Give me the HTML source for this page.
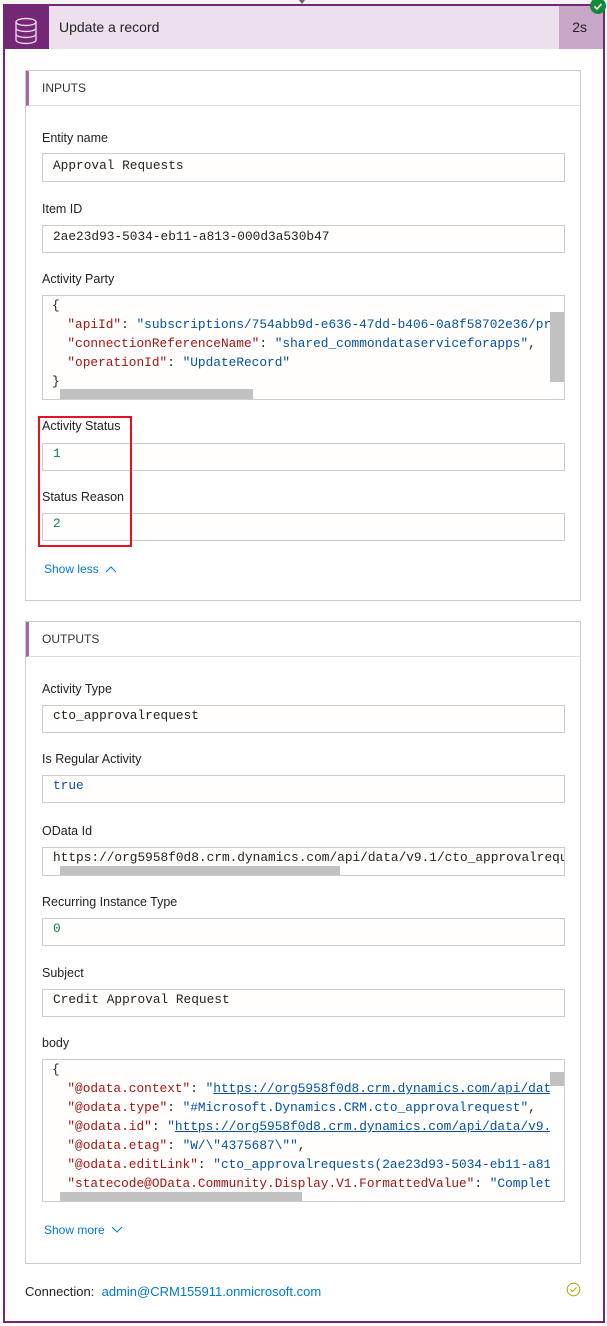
<!DOCTYPE html>
<html><head><meta charset="utf-8"><style>
*{box-sizing:border-box;margin:0;padding:0}
body{width:607px;height:1326px;background:#fff;font-family:"Liberation Sans",sans-serif;position:relative;overflow:hidden;color:#222}
.abs{position:absolute}
.outer{left:3px;top:4px;width:602px;height:1319px;border:2px solid #742774}
.hdr{left:5px;top:6px;width:598px;height:43px;background:#ebe0ec}
.ico{left:5px;top:6px;width:44px;height:43px;background:#742774}
.time{left:559px;top:6px;width:44px;height:43px;background:#c9a7c9;font-size:14px;line-height:43px;text-align:right;padding-right:16px;color:#222}
.title{left:59px;top:6px;line-height:43px;font-size:14px;color:#222}
.card{border:1px solid #ccc;background:#fff}
.ch{position:absolute;left:0;top:0;right:0;height:35px;border-bottom:1px solid #ddd;border-left:3px solid #a066a6;font-size:12px;line-height:35px;padding-left:13px;color:#333}
.lbl{position:absolute;left:42px;font-size:12.5px;color:#222}
.box{position:absolute;left:42px;width:523px;border:1px solid #ccc;background:#fffefc;font-family:"Liberation Mono",monospace;font-size:12.8px;padding-left:10px;color:#222;white-space:pre;overflow:hidden}
.g{color:#098658}.b{color:#0451a5}.r{color:#a31515}
.link{color:#0078d4;font-size:12px}
</style></head><body>
<div class="abs" style="left:0;top:0;width:607px;height:5px;background:#f4f4f4"></div>
<div class="abs outer"></div>
<div class="abs" style="left:299px;top:0;width:0;height:0;border-left:3px solid transparent;border-right:3px solid transparent;border-top:4px solid #666"></div>
<div class="abs hdr"></div>
<div class="abs ico"><svg width="44" height="43" viewBox="0 0 44 43"><g fill="none" stroke="#e8d8e8" stroke-width="1.4"><ellipse cx="21" cy="16" rx="10" ry="3.5"/><path d="M11 16v18c0 2 4.5 3.5 10 3.5s10-1.5 10-3.5V16M11 22c0 2 4.5 3.5 10 3.5s10-1.5 10-3.5M11 28c0 2 4.5 3.5 10 3.5s10-1.5 10-3.5"/></g></svg></div>
<div class="abs title">Update a record</div>
<div class="abs time">2s</div>
<div class="abs" style="left:590px;top:-2px;width:16px;height:16px;border-radius:50%;background:#138a36"><svg width="16" height="16"><path d="M4.5 8.5l2.5 2.5 4.5-5" stroke="#fff" stroke-width="1.6" fill="none"/></svg></div>

<div class="abs card" style="left:25px;top:70px;width:556px;height:531px"><div class="ch">INPUTS</div></div>
<div class="lbl" style="top:131px">Entity name</div>
<div class="box" style="top:153px;height:29px;line-height:23px">Approval Requests</div>
<div class="lbl" style="top:202px">Item ID</div>
<div class="box" style="top:225px;height:28px;line-height:22px">2ae23d93-5034-eb11-a813-000d3a530b47</div>
<div class="lbl" style="top:272px">Activity Party</div>
<div class="box" style="top:295px;height:105px;line-height:19px;padding-left:9px;padding-top:0">{
  <span class="r">"apiId"</span>: <span class="b">"subscriptions/754abb9d-e636-47dd-b406-0a8f58702e36/providers</span>
  <span class="r">"connectionReferenceName"</span>: <span class="b">"shared_commondataserviceforapps"</span>,
  <span class="r">"operationId"</span>: <span class="b">"UpdateRecord"</span>
}</div>
<div class="abs" style="left:550px;top:296px;width:14px;height:103px;background:#fff"><div style="position:absolute;top:16px;left:0;width:14px;height:70px;background:#c1c1c1"></div></div>
<div class="abs" style="left:60px;top:389px;width:193px;height:10px;background:#c1c1c1"></div>
<div class="lbl" style="top:419px">Activity Status</div>
<div class="box g" style="top:443px;height:28px;line-height:20px">1</div>
<div class="lbl" style="top:490px">Status Reason</div>
<div class="box g" style="top:513px;height:28px;line-height:20px">2</div>
<div class="abs" style="left:38px;top:416px;width:94px;height:131px;border:2px solid #e81123"></div>
<div class="abs link" style="left:44px;top:562px">Show less &nbsp;<svg width="12" height="8"><path d="M1 7l5-5 5 5" stroke="#0078d4" fill="none"/></svg></div>

<div class="abs card" style="left:25px;top:621px;width:556px;height:643px"><div class="ch">OUTPUTS</div></div>
<div class="lbl" style="top:682px">Activity Type</div>
<div class="box" style="top:705px;height:28px;line-height:20px">cto_approvalrequest</div>
<div class="lbl" style="top:752px">Is Regular Activity</div>
<div class="box b" style="top:775px;height:28px;line-height:20px">true</div>
<div class="lbl" style="top:824px">OData Id</div>
<div class="box" style="top:847px;height:29px;line-height:20px">https://org5958f0d8.crm.dynamics.com/api/data/v9.1/cto_approvalrequests</div>
<div class="abs" style="left:60px;top:866px;width:280px;height:9px;background:#c1c1c1"></div>
<div class="lbl" style="top:895px">Recurring Instance Type</div>
<div class="box g" style="top:918px;height:28px;line-height:20px">0</div>
<div class="lbl" style="top:966px">Subject</div>
<div class="box" style="top:989px;height:28px;line-height:20px">Credit Approval Request</div>
<div class="lbl" style="top:1036px">body</div>
<div class="box" style="top:1059px;height:143px;line-height:19px;padding-left:9px">{
  <span class="r">"@odata.context"</span>: <span class="b">"<u>https://org5958f0d8.crm.dynamics.com/api/data/v9.1/</u></span>
  <span class="r">"@odata.type"</span>: <span class="b">"#Microsoft.Dynamics.CRM.cto_approvalrequest"</span>,
  <span class="r">"@odata.id"</span>: <span class="b">"<u>https://org5958f0d8.crm.dynamics.com/api/data/v9.1/</u></span>
  <span class="r">"@odata.etag"</span>: <span class="b">"W/\"4375687\""</span>,
  <span class="r">"@odata.editLink"</span>: <span class="b">"cto_approvalrequests(2ae23d93-5034-eb11-a813-000d</span>
  <span class="r">"statecode@OData.Community.Display.V1.FormattedValue"</span>: <span class="b">"Completed"</span>
  <span class="r">"statecode"</span>: <span class="g">1</span></div>
<div class="abs" style="left:60px;top:1192px;width:242px;height:9px;background:#c1c1c1"></div>
<div class="abs" style="left:550px;top:1060px;width:14px;height:141px;background:#fff"><div style="position:absolute;top:12px;left:0;width:14px;height:14px;background:#c1c1c1"></div></div>
<div class="abs link" style="left:44px;top:1223px">Show more &nbsp;<svg width="12" height="8"><path d="M1 1l5 5 5-5" stroke="#0078d4" fill="none"/></svg></div>

<div class="abs" style="left:25px;top:1284px;font-size:13px;color:#222">Connection: &nbsp;<span style="color:#0078d4">admin@CRM155911.onmicrosoft.com</span></div>
<div class="abs" style="left:566px;top:1282px"><svg width="15" height="15"><circle cx="7.5" cy="7.5" r="6.3" stroke="#b3a000" fill="none"/><path d="M4.5 7.5l2 2 4-4" stroke="#b3a000" fill="none"/></svg></div>
</body></html>
